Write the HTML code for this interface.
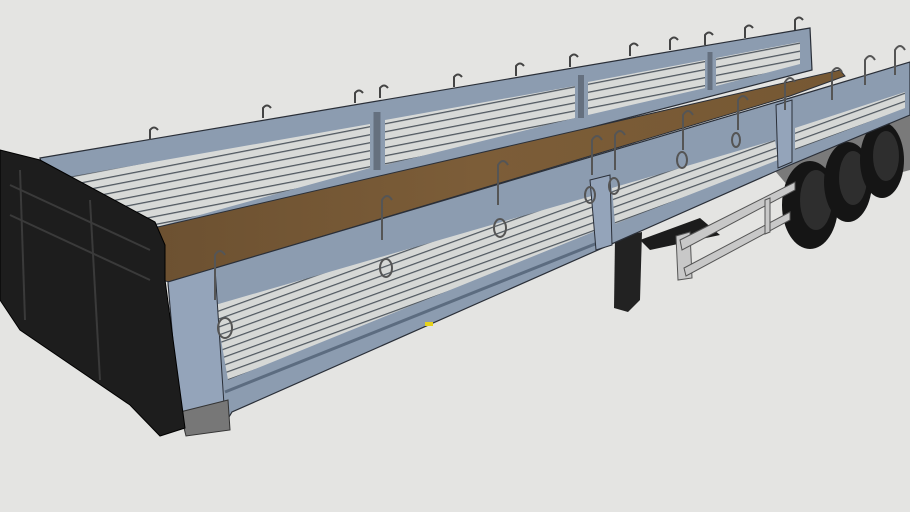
<!DOCTYPE html>
<html><head><meta charset="utf-8"><style>html,body{margin:0;padding:0;background:#e4e4e2;width:910px;height:512px;overflow:hidden}</style></head>
<body>
<svg width="910" height="512" viewBox="0 0 910 512" xmlns="http://www.w3.org/2000/svg">
<defs>
<pattern id="cor" width="40" height="8" patternUnits="userSpaceOnUse" patternTransform="skewY(-11)">
<rect width="40" height="8" fill="#d8dad8"/><rect y="6" width="40" height="1.3" fill="#505860"/></pattern>
<pattern id="cor2" width="40" height="8" patternUnits="userSpaceOnUse" patternTransform="skewY(-20)">
<rect width="40" height="8" fill="#d6d8d6"/><rect y="6" width="40" height="1.3" fill="#505860"/></pattern>
<linearGradient id="wood" x1="0" y1="0" x2="1" y2="0"><stop offset="0" stop-color="#6a4f30"/><stop offset="0.5" stop-color="#7c5d38"/><stop offset="1" stop-color="#765833"/></linearGradient>
</defs>
<rect width="910" height="512" fill="#e4e4e2"/>
<!-- far wall -->
<polygon points="40,158 810,28 812,70 165,238 60,236" fill="#8c9cb0" stroke="#2a2f38" stroke-width="1.2"/>
<polygon points="62,178 370,124 370,168 160,226 70,226" fill="url(#cor)"/>
<polygon points="385,120 575,86 575,118 385,165" fill="url(#cor)"/>
<polygon points="588,82 705,60 705,88 588,115" fill="url(#cor)"/>
<polygon points="716,58 800,42 800,64 716,86" fill="url(#cor)"/>
<line x1="377" y1="112" x2="377" y2="170" stroke="#2a2f38" stroke-width="7" stroke-opacity=".4"/>
<line x1="581" y1="75" x2="581" y2="118" stroke="#2a2f38" stroke-width="6" stroke-opacity=".4"/>
<line x1="710" y1="52" x2="710" y2="90" stroke="#2a2f38" stroke-width="5" stroke-opacity=".4"/>
<!-- wood deck -->
<polygon points="110,238 840,70 845,76 790,96 170,282 110,270" fill="url(#wood)" stroke="#2a2f38" stroke-width="1"/>
<!-- under parts -->
<polygon points="640,240 700,218 720,235 650,250" fill="#1c1c1c"/>
<polygon points="615,238 642,232 640,300 628,312 614,308" fill="#222"/>
<!-- fender and wheels -->
<polygon points="770,165 910,115 910,170 800,200" fill="#7a7a7a"/>
<ellipse cx="810" cy="205" rx="28" ry="44" fill="#151515"/><ellipse cx="816" cy="200" rx="16" ry="30" fill="#2e2e2e"/>
<ellipse cx="848" cy="182" rx="24" ry="40" fill="#151515"/><ellipse cx="853" cy="178" rx="14" ry="27" fill="#2e2e2e"/>
<ellipse cx="882" cy="160" rx="22" ry="38" fill="#151515"/><ellipse cx="886" cy="156" rx="13" ry="25" fill="#2e2e2e"/>
<!-- bumper -->
<g fill="#c8c8c8" stroke="#555" stroke-width="1">
<polygon points="676,236 690,232 692,278 678,280"/>
<polygon points="680,240 795,182 795,190 682,250"/>
<polygon points="684,268 790,212 790,220 686,276"/>
<polygon points="765,200 770,198 770,232 765,234"/>
</g>
<!-- near wall -->
<polygon points="168,282 790,98 910,62 910,115 790,165 232,412 226,422 180,422" fill="#8c9cb0" stroke="#2a2f38" stroke-width="1.2"/>
<polygon points="215,305 595,195 598,230 228,380" fill="url(#cor2)"/>
<polygon points="612,188 775,140 778,160 615,224" fill="url(#cor2)"/>
<polygon points="795,128 905,92 905,108 795,150" fill="url(#cor2)"/>
<line x1="225" y1="392" x2="600" y2="242" stroke="#5c6c80" stroke-width="3"/>
<polygon points="168,282 215,268 225,420 180,424" fill="#94a4ba" stroke="#2a2f38" stroke-width="1"/>
<polygon points="590,180 610,175 612,245 596,250" fill="#94a4ba" stroke="#2a2f38" stroke-width="1"/>
<polygon points="776,105 792,100 792,162 778,168" fill="#94a4ba" stroke="#2a2f38" stroke-width="1"/>
<polygon points="180,412 228,400 230,430 186,436" fill="#777" stroke="#333"/>
<rect x="425" y="322" width="8" height="4" fill="#e6d21c"/>
<!-- headboard -->
<polygon points="0,150 40,160 155,222 165,245 165,280 185,428 160,436 130,405 20,330 0,300" fill="#1d1d1d" stroke="#000"/>
<g stroke="#3a3a3a" stroke-width="2" fill="none">
<line x1="10" y1="185" x2="150" y2="250"/><line x1="10" y1="215" x2="150" y2="280"/>
<line x1="90" y1="200" x2="100" y2="380"/><line x1="20" y1="170" x2="25" y2="320"/>
</g>
<!-- hooks -->
<g stroke="#444" stroke-width="2" fill="none">
<path d="M150,140 v-10 q4,-5 8,0"/><path d="M263,118 v-10 q4,-5 8,0"/><path d="M355,103 v-10 q4,-5 8,0"/><path d="M380,98 v-10 q4,-5 8,0"/>
<path d="M454,87 v-10 q4,-5 8,0"/><path d="M516,76 v-10 q4,-5 8,0"/><path d="M570,67 v-10 q4,-5 8,0"/><path d="M630,56 v-10 q4,-5 8,0"/>
<path d="M670,50 v-10 q4,-5 8,0"/><path d="M705,45 v-10 q4,-5 8,0"/><path d="M745,38 v-10 q4,-5 8,0"/><path d="M795,30 v-10 q4,-5 8,0"/>
</g>
<g stroke="#555" stroke-width="2" fill="none">
<path d="M215,300 v-45 q5,-8 10,0"/><ellipse cx="225" cy="328" rx="7" ry="10"/>
<path d="M382,240 v-40 q5,-8 10,0"/><ellipse cx="386" cy="268" rx="6" ry="9"/>
<path d="M498,205 v-40 q5,-8 10,0"/><ellipse cx="500" cy="228" rx="6" ry="9"/>
<path d="M592,175 v-35 q5,-8 10,0"/><ellipse cx="590" cy="195" rx="5" ry="8"/>
<path d="M615,170 v-35 q5,-8 10,0"/><ellipse cx="614" cy="186" rx="5" ry="8"/>
<path d="M683,150 v-35 q5,-8 10,0"/><ellipse cx="682" cy="160" rx="5" ry="8"/>
<path d="M738,130 v-30 q5,-8 10,0"/><ellipse cx="736" cy="140" rx="4" ry="7"/>
<path d="M785,110 v-28 q5,-8 10,0"/><path d="M832,100 v-28 q5,-8 10,0"/><path d="M865,85 v-25 q5,-8 10,0"/><path d="M895,75 v-25 q5,-8 10,0"/>
</g>
</svg>
</body></html>
